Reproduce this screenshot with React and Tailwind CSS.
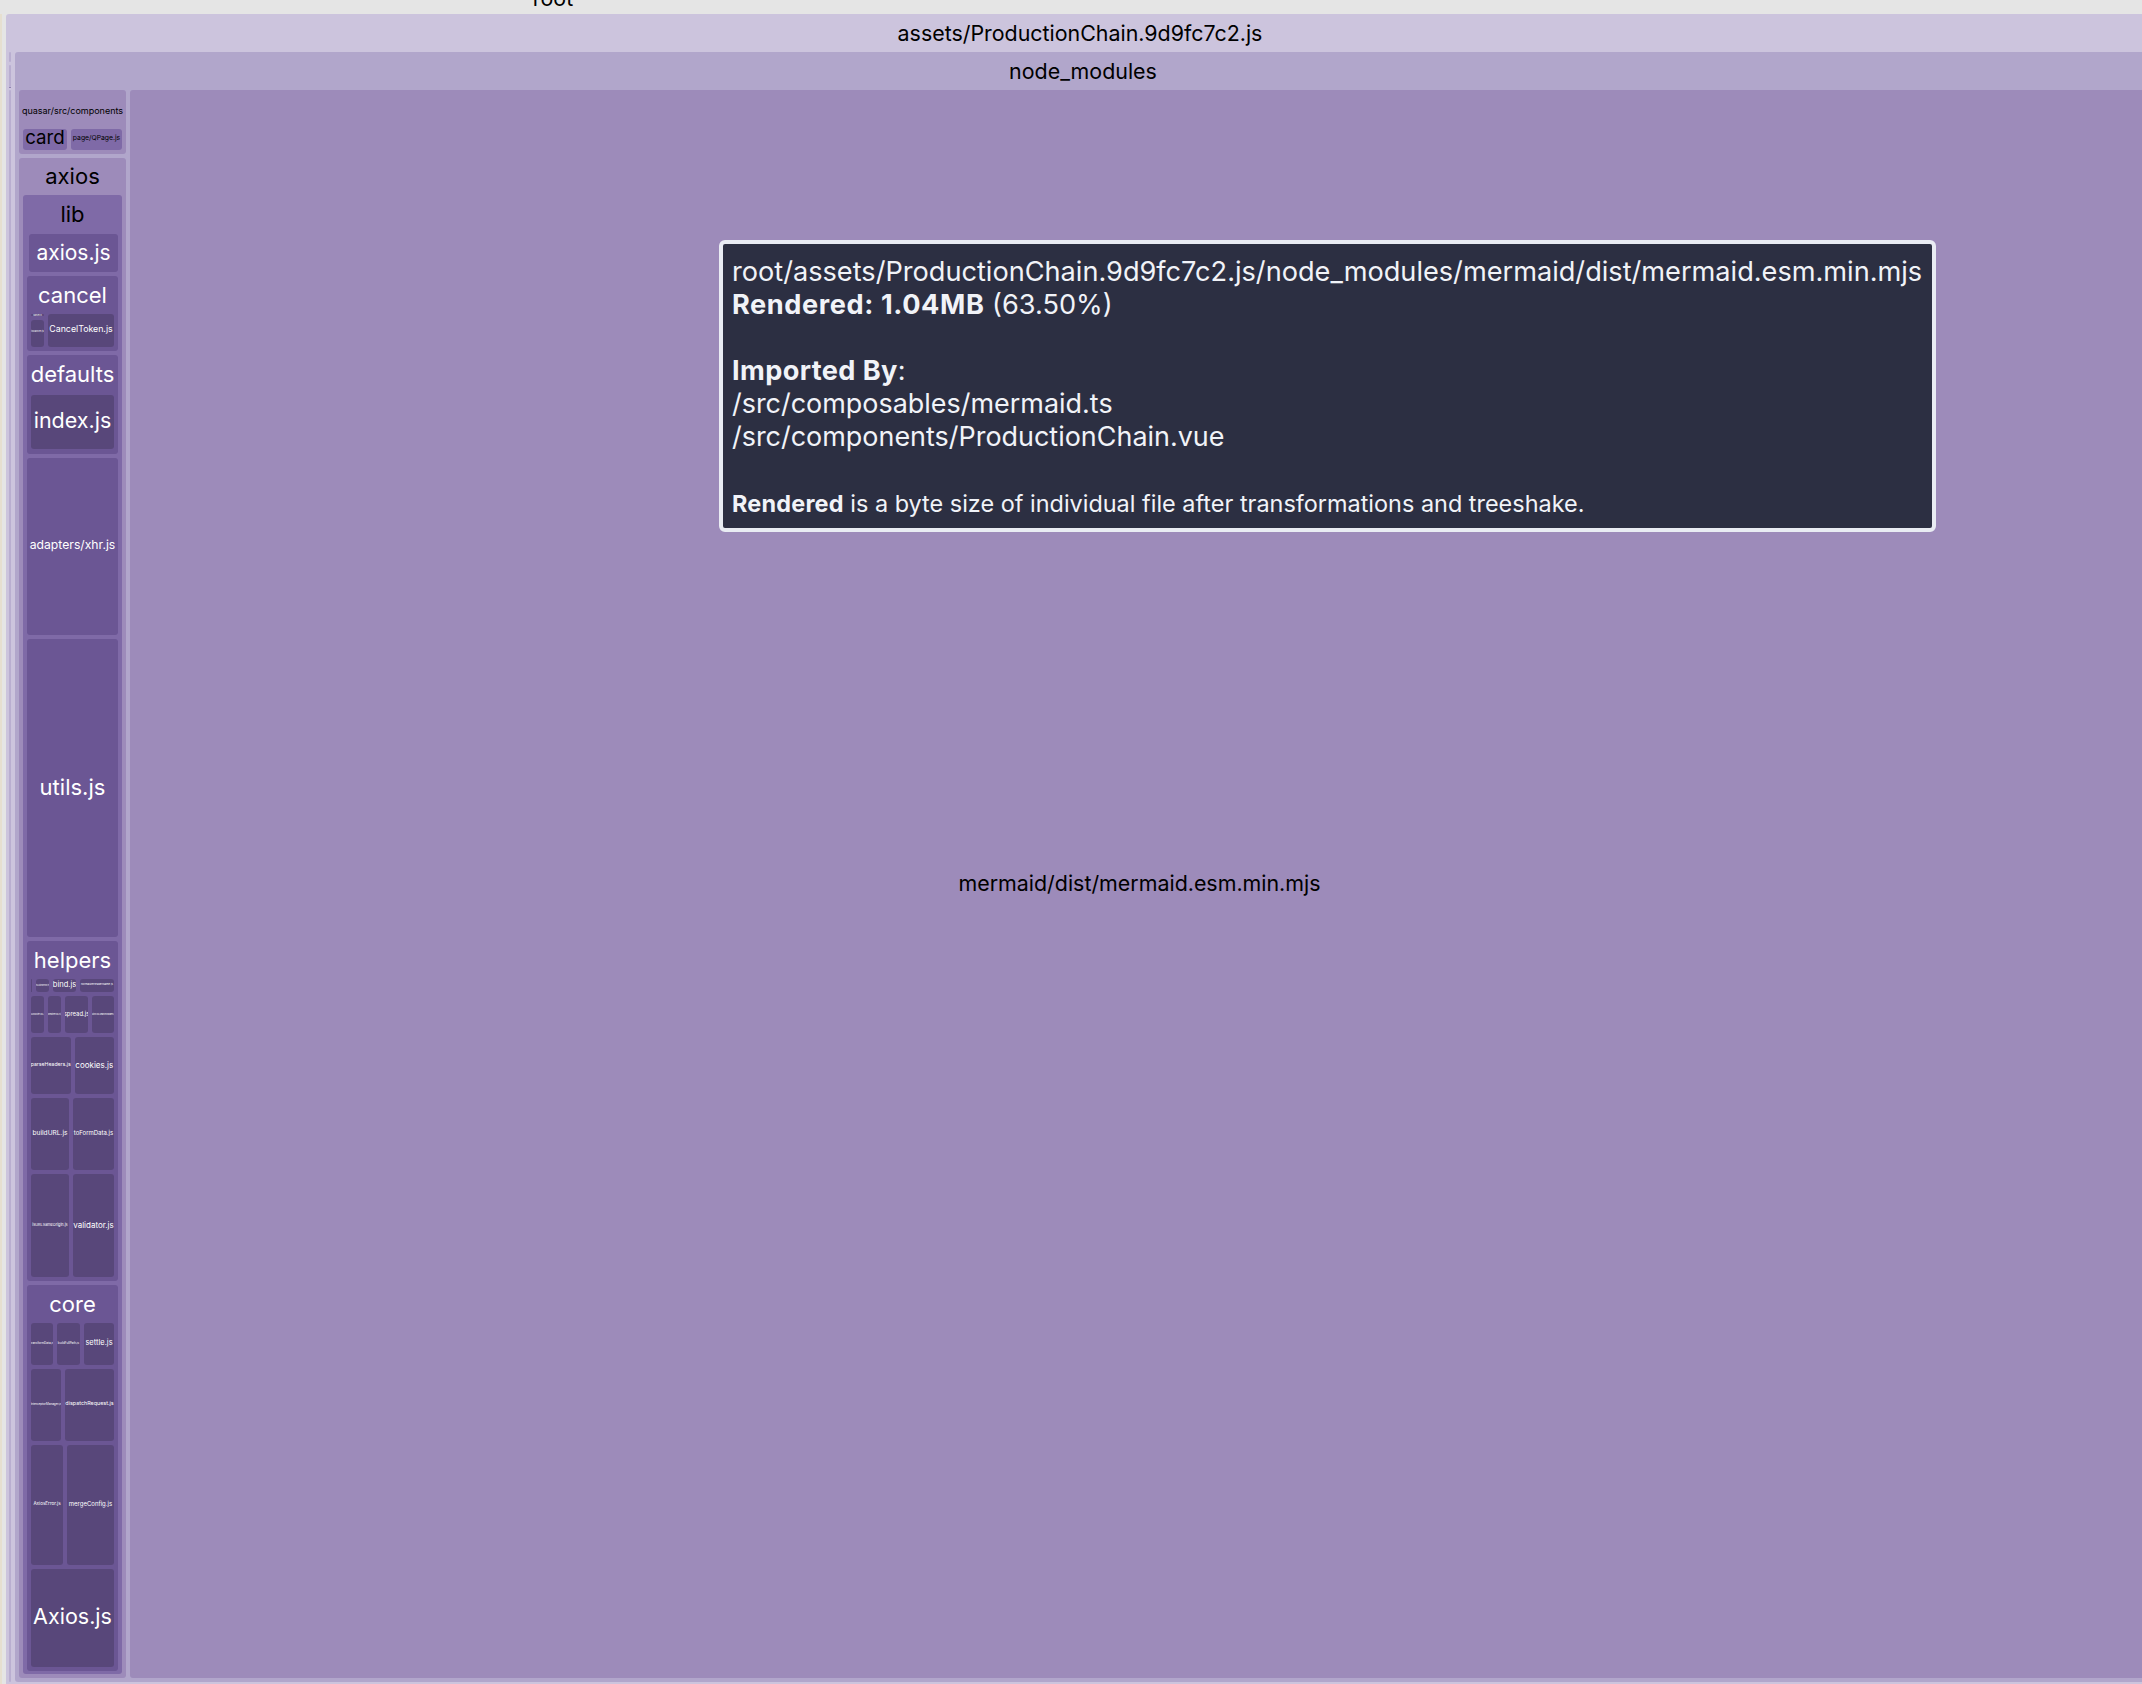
const Leaf = ({ className = "", text, size = "text-[8px]" }) => (
  <div className={`flex min-w-0 items-center justify-center overflow-hidden whitespace-nowrap rounded-[3px] pb-[2px] leading-none ${size} ${className}`}>
    {text}
  </div>
);

const Dark = ({ className = "", text, size }) => (
  <Leaf className={`bg-[#58477a] text-white ${className}`} text={text} size={size} />
);

const Group = ({ title, titleClass, size = "text-[22px]", className = "", children }) => (
  <div className={`flex flex-col rounded-[3px] px-[4px] pb-[4px] ${className}`}>
    <div className={`flex shrink-0 items-center justify-center leading-none ${titleClass} ${size}`}>{title}</div>
    {children}
  </div>
);

export default function App() {
  return (
    <div className="relative flex h-[1684px] w-[2142px] flex-col overflow-hidden bg-[#e5e5e5] font-['Inter',sans-serif] text-black">
      <div className="flex h-[14px] shrink-0 justify-center pr-[1036px]">
        <span className="-mt-[12px] block h-[20px] text-[21.4px] leading-[20px]">root</span>
      </div>
      <div className="flex min-h-0 flex-1">
        <div className="mr-[4px] w-[2px] shrink-0 bg-[#e6dfd0]" />
        <div className="flex w-[2148px] shrink-0 flex-col rounded-t-[3px] bg-[#ccc4dd]">
          <div className="flex h-[38px] shrink-0 items-center justify-center text-[21.4px]">assets/ProductionChain.9d9fc7c2.js</div>
          <div className="flex min-h-0 flex-1 gap-[4px] pl-[3px]">
            <div className="flex w-[2px] shrink-0 flex-col">
              <div className="h-[10px] shrink-0 rounded-[1px] bg-[#b9aed0]" />
              <div className="mt-[3px] h-[22px] shrink-0 rounded-[1px] bg-[#b9aed0]" />
              <div className="h-[1px] shrink-0 bg-[#8f80ae]" />
              <div className="mt-[2px] h-[1592px] shrink-0 rounded-[1px] bg-[#b9aed0]" />
            </div>
            <div className="flex h-[1630px] w-[2136px] shrink-0 flex-col rounded-[3px] bg-[#b1a6cb]">
              <div className="flex h-[38px] shrink-0 items-center justify-center text-[21.4px]">node_modules</div>
              <div className="flex min-h-0 flex-1 gap-[4px] pb-[4px] pl-[4px]">
                <div className="flex w-[107px] shrink-0 flex-col gap-[4px]">
                  <Group title="quasar/src/components" titleClass="h-[39px] pt-[2px]" size="text-[9px]" className="h-[64px] shrink-0 bg-[#9d8bba]">
                    <div className="flex h-[21px] shrink-0 gap-[4px]">
                      <Leaf className="w-[44px] !overflow-visible bg-[#7f6aa7]" text="card" size="text-[18.7px]" />
                      <Leaf className="w-[51px] bg-[#7f6aa7]" text="page/QPage.js" size="text-[6.8px]" />
                    </div>
                  </Group>
                  <Group title="axios" titleClass="h-[37px] pb-[2px]" className="h-[1520px] shrink-0 bg-[#9d8bba]">
                    <Group title="lib" titleClass="h-[39px] pb-[2px]" className="h-[1479px] shrink-0 !pb-[3px] bg-[#7f6aa7]">
                      <div className="flex flex-col gap-[4px]">
                        <Leaf className="ml-[2px] h-[38px] shrink-0 bg-[#6b5694] text-white" text="axios.js" size="text-[21px]" />
                        <Group title="cancel" titleClass="h-[38px] text-white" className="h-[75px] shrink-0 bg-[#6b5694]">
                          <div className="flex h-[33px] shrink-0 gap-[4px]">
                            <div className="flex w-[13px] shrink-0 flex-col gap-[4px]">
                              <Dark className="h-[2px] shrink-0 !pb-0" text="Cancel.js" size="text-[2px]" />
                              <Dark className="h-[27px] shrink-0" text="isCancel.js" size="text-[2.5px]" />
                            </div>
                            <Dark className="w-[66px]" text="CancelToken.js" size="text-[8.8px]" />
                          </div>
                        </Group>
                        <Group title="defaults" titleClass="h-[40px] pb-[2px] text-white" className="h-[99px] shrink-0 bg-[#6b5694]">
                          <Dark className="h-[54px] shrink-0" text="index.js" size="text-[21.5px]" />
                        </Group>
                        <Leaf className="h-[177px] shrink-0 bg-[#6b5694] text-white" text="adapters/xhr.js" size="text-[12.2px]" />
                        <Leaf className="h-[298px] shrink-0 bg-[#6b5694] text-white" text="utils.js" size="text-[22px]" />
                        <Group title="helpers" titleClass="h-[38px] text-white" className="h-[340px] shrink-0 bg-[#6b5694]">
                          <div className="flex flex-col gap-[4px]">
                            <div className="flex h-[13px] shrink-0 gap-[4px]">
                              <Dark className="w-[1px]" text="" />
                              <Dark className="w-[13px]" text="isAxiosError.js" size="text-[2px]" />
                              <Dark className="w-[23px]" text="bind.js" size="text-[7.5px]" />
                              <Dark className="w-[34px]" text="normalizeHeaderName.js" size="text-[2.7px]" />
                            </div>
                            <div className="flex h-[37px] shrink-0 gap-[4px]">
                              <Dark className="w-[13px]" text="isAbsoluteURL.js" size="text-[2px]" />
                              <Dark className="w-[13px]" text="combineURLs.js" size="text-[2px]" />
                              <Dark className="w-[23px]" text="spread.js" size="text-[5.9px]" />
                              <Dark className="w-[22px]" text="AxiosURLSearchParams.js" size="text-[2px]" />
                            </div>
                            <div className="flex h-[57px] shrink-0 gap-[4px]">
                              <Dark className="flex-1" text="parseHeaders.js" size="text-[5.2px]" />
                              <Dark className="flex-1" text="cookies.js" size="text-[8px]" />
                            </div>
                            <div className="flex h-[72px] shrink-0 gap-[4px]">
                              <Dark className="w-[38px]" text="buildURL.js" size="text-[6.6px]" />
                              <Dark className="w-[41px]" text="toFormData.js" size="text-[6px]" />
                            </div>
                            <div className="flex h-[103px] shrink-0 gap-[4px]">
                              <Dark className="w-[38px]" text="isURLSameOrigin.js" size="text-[3.8px]" />
                              <Dark className="w-[41px]" text="validator.js" size="text-[8px]" />
                            </div>
                          </div>
                        </Group>
                        <Group title="core" titleClass="h-[38px] text-white" className="h-[386px] shrink-0 bg-[#6b5694]">
                          <div className="flex flex-col gap-[4px]">
                            <div className="flex h-[42px] shrink-0 gap-[4px]">
                              <Dark className="w-[22px]" text="transformData.js" size="text-[3px]" />
                              <Dark className="w-[23px]" text="buildFullPath.js" size="text-[3px]" />
                              <Dark className="w-[30px]" text="settle.js" size="text-[7.5px]" />
                            </div>
                            <div className="flex h-[72px] shrink-0 gap-[4px]">
                              <Dark className="w-[30px]" text="InterceptorManager.js" size="text-[3px]" />
                              <Dark className="w-[49px]" text="dispatchRequest.js" size="text-[5.4px]" />
                            </div>
                            <div className="flex h-[120px] shrink-0 gap-[4px]">
                              <Dark className="w-[32px]" text="AxiosError.js" size="text-[4.6px]" />
                              <Dark className="w-[47px]" text="mergeConfig.js" size="text-[6px]" />
                            </div>
                            <Dark className="h-[98px] shrink-0" text="Axios.js" size="text-[21.5px]" />
                          </div>
                        </Group>
                      </div>
                    </Group>
                  </Group>
                </div>
                <div className="flex flex-1 items-center justify-center rounded-[3px] bg-[#9d8bba] pb-[2px] pr-[2px] text-[21.4px]">
                  mermaid/dist/mermaid.esm.min.mjs
                </div>
              </div>
            </div>
          </div>
        </div>
      </div>
      <div className="absolute left-[719px] top-[240px] flex h-[292px] w-[1217px] flex-col rounded-[6px] border-[4px] border-[#e9ecf3] bg-[#2c2f42] pl-[9px] text-[#f1f3f8]">
        <div className="mt-[11px] whitespace-nowrap text-[27.15px] leading-[33px]">
          <div>root/assets/ProductionChain.9d9fc7c2.js/node_modules/mermaid/dist/mermaid.esm.min.mjs</div>
          <div><b className="font-bold tracking-[0.6px]">Rendered: 1.04MB</b> (63.50%)</div>
          <div className="mt-[33px]"><b className="font-bold tracking-[0.4px]">Imported By</b>:</div>
          <div className="text-[26.95px]">/src/composables/mermaid.ts</div>
          <div className="text-[26.95px]">/src/components/ProductionChain.vue</div>
          <div className="mt-[34px] text-[23.45px] leading-[33px]"><b className="font-bold tracking-[0.2px]">Rendered</b> is a byte size of individual file after transformations and treeshake.</div>
        </div>
      </div>
    </div>
  );
}
